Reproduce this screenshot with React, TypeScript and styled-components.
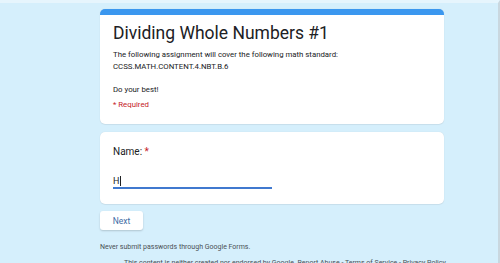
import React from "react";
import styled, { createGlobalStyle } from "styled-components";

const Global = createGlobalStyle`
  html, body { margin: 0; padding: 0; background: #d5effc; }
  body { font-family: Roboto, "Liberation Sans", Arial, sans-serif; color: #202124; overflow: hidden; }
`;

const Page = styled.div`
  width: 500px;
  height: 263px;
  box-sizing: border-box;
  border-top: 3px solid #e6f5fd;
  border-right: 2px solid #c9d7df;
  overflow: hidden;
`;

const Column = styled.div`
  width: 344px;
  margin-left: 100px;
  padding-top: 6px;
  display: flex;
  flex-direction: column;
`;

const Card = styled.div<{ $accent?: boolean }>`
  background: #fff;
  border-radius: 5px;
  box-shadow: 0 0 1px rgba(0, 0, 0, 0.12), 0 1px 1px rgba(0, 0, 0, 0.06);
  border-top: ${(p) => (p.$accent ? "6px solid #3b97ef" : "none")};
  box-sizing: border-box;
  padding: ${(p) => (p.$accent ? "7px 13px 0" : "13px 13px 0")};
  height: ${(p) => (p.$accent ? "115px" : "72px")};
  margin-bottom: ${(p) => (p.$accent ? "8px" : "7px")};
`;

const Title = styled.h1`
  margin: 0;
  font-size: 17.5px;
  font-weight: 400;
  line-height: 22px;
  color: #202124;
`;

const Desc = styled.p`
  margin: 5px 0 0;
  font-size: 7.8px;
  line-height: 11.5px;
  color: #202124;
`;

const Required = styled.div`
  margin-top: 4px;
  font-size: 7.8px;
  line-height: 12px;
  color: #c5221f;
`;

const Label = styled.div`
  font-size: 10px;
  line-height: 14px;
  color: #202124;
  span { color: #c5221f; }
`;

const Input = styled.div`
  margin-top: 16px;
  width: 159px;
  border-bottom: 2px solid #4079cf;
  font-size: 9px;
  line-height: 12px;
  height: 12px;
  color: #202124;
  display: flex;
  align-items: center;
`;

const Caret = styled.i`
  display: inline-block;
  width: 1px;
  height: 10px;
  background: #202124;
  margin-left: 1px;
`;

const NextButton = styled.button`
  display: block;
  width: 43px;
  height: 19px;
  border: none;
  border-radius: 3px;
  background: #fff;
  box-shadow: 0 1px 2px rgba(0, 0, 0, 0.18);
  font-family: inherit;
  font-size: 8.5px;
  color: #3e6da5;
  padding: 0;
  cursor: pointer;
`;

const Note = styled.div`
  margin-top: 12px;
  font-size: 7px;
  line-height: 10px;
  color: #4a4f55;
`;

const Footer = styled.div`
  margin-top: 6px;
  margin-left: 24px;
  font-size: 7px;
  line-height: 10px;
  color: #4a4f55;
  white-space: nowrap;
`;

export default function App() {
  return (
    <>
      <Global />
      <Page>
        <Column>
          <Card $accent>
            <Title>Dividing Whole Numbers #1</Title>
            <Desc>
              The following assignment will cover the following math standard:
              <br />
              CCSS.MATH.CONTENT.4.NBT.B.6
              <br />
              <br />
              Do your best!
            </Desc>
            <Required>* Required</Required>
          </Card>
          <Card>
            <Label>
              Name: <span>*</span>
            </Label>
            <Input>
              H<Caret />
            </Input>
          </Card>
          <NextButton>Next</NextButton>
          <Note>Never submit passwords through Google Forms.</Note>
          <Footer>
            This content is neither created nor endorsed by Google. Report Abuse - Terms of Service - Privacy Policy
          </Footer>
        </Column>
      </Page>
    </>
  );
}
